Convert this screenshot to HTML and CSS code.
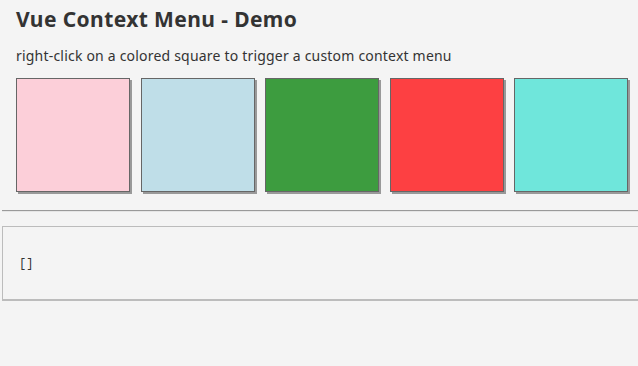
FILE: index.html
```html
<!DOCTYPE html>
<html lang="en">
<head>
  <meta charset="UTF-8">
  <title>Vue Context Menu - Demo</title>
  <link rel="stylesheet" href="styles.css">
</head>
<body>
  <header class="intro">
    <h1>Vue Context Menu - Demo</h1>
    <p>right-click on a colored square to trigger a custom context menu</p>
  </header>

  <section class="squares">
    <div class="square pink"></div>
    <div class="square blue"></div>
    <div class="square green"></div>
    <div class="square red"></div>
    <div class="square teal"></div>
  </section>

  <hr>

  <pre class="log">[]</pre>
</body>
</html>
```

FILE: styles.css
```css
* {
  margin: 0;
  padding: 0;
  box-sizing: border-box;
}

body {
  background-color: #f4f4f4;
  color: #333;
  font-family: "Noto Sans", "Open Sans", sans-serif;
  overflow: hidden;
}

.intro {
  padding: 5px 16px 0;
}

.intro h1 {
  font-size: 21px;
  font-weight: bold;
  letter-spacing: 0.4px;
  line-height: 28px;
}

.intro p {
  margin-top: 13px;
  font-size: 14px;
  letter-spacing: 0.2px;
  line-height: 20px;
}

.squares {
  display: flex;
  gap: 10.5px;
  padding: 12px 16px 0;
}

.square {
  flex: none;
  width: 114px;
  height: 114px;
  border: 1px solid #666;
  box-shadow: 2px 2px 0 #999;
}

.pink { background-color: #fccfd9; }
.blue { background-color: #bfdee8; }
.green { background-color: #3d9c3f; }
.red { background-color: #fd4042; }
.teal { background-color: #6fe6db; }

hr {
  margin: 18px 0 0 2px;
  border: none;
  border-top: 1px solid #9a9a9a;
  border-bottom: 1px solid #e6e6e6;
}

.log {
  margin: 14px -20px 0 2px;
  height: 75px;
  padding: 29px 16px 0;
  border: 1px solid #bcbcbc;
  border-bottom-width: 2px;
  color: #333;
  font-family: "Liberation Mono", monospace;
  font-size: 12px;
  line-height: 16px;
}
```
